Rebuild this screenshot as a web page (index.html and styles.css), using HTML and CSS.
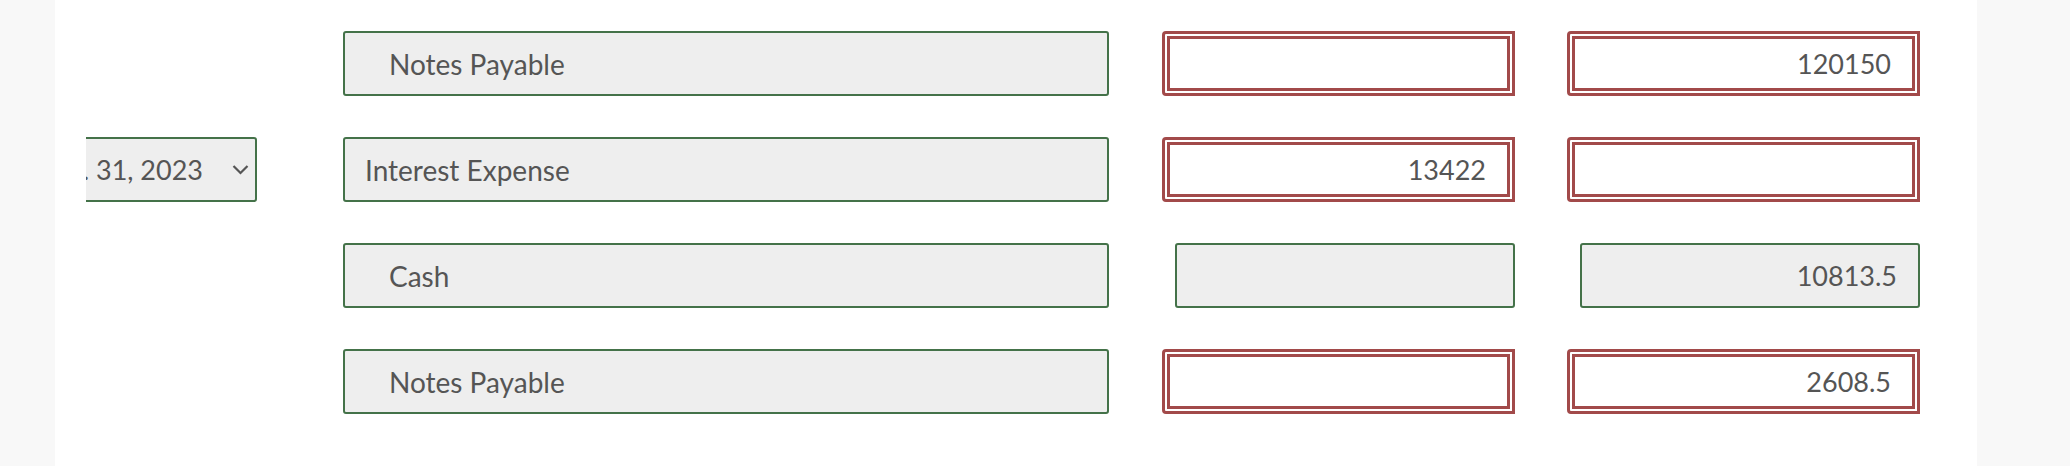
FILE: index.html
```html
<!DOCTYPE html>
<html lang="en">
<head>
<meta charset="utf-8">
<title>Journal entry</title>
<link rel="stylesheet" href="styles.css">
</head>
<body>
<div class="page">
  <div class="side"></div>
  <main class="main">
    <div class="row">
      <div class="date-cell"></div>
      <div class="account credit">Notes Payable</div>
      <div class="amount"><div class="invalid"><div class="field"></div></div></div>
      <div class="amount second"><div class="invalid"><div class="field">120150</div></div></div>
    </div>
    <div class="row">
      <div class="date-cell">
        <div class="select">
          <span class="select-text">Dec. 31, 2023</span>
          <svg class="chev" width="17" height="11" viewBox="0 0 17 11"><polyline points="1.5,2 8.5,9 15.5,2" fill="none" stroke="#555" stroke-width="2.2"/></svg>
        </div>
      </div>
      <div class="account">Interest Expense</div>
      <div class="amount"><div class="invalid"><div class="field">13422</div></div></div>
      <div class="amount second"><div class="invalid"><div class="field"></div></div></div>
    </div>
    <div class="row">
      <div class="date-cell"></div>
      <div class="account credit">Cash</div>
      <div class="amount"><div class="valid"></div></div>
      <div class="amount second"><div class="valid">10813.5</div></div>
    </div>
    <div class="row">
      <div class="date-cell"></div>
      <div class="account credit">Notes Payable</div>
      <div class="amount"><div class="invalid"><div class="field"></div></div></div>
      <div class="amount second"><div class="invalid"><div class="field">2608.5</div></div></div>
    </div>
  </main>
  <div class="side"></div>
</div>
</body>
</html>
```
FILE: styles.css
```css
html, body {
  margin: 0;
  padding: 0;
  background: #ffffff;
}
body {
  font-family: "Lato", "Liberation Sans", sans-serif;
  color: #555555;
  font-size: 28px;
}
.page {
  display: grid;
  grid-template-columns: 55px 1fr 93px;
  height: 466px;
}
.side {
  background: #f8f8f8;
}
.main {
  background: #ffffff;
  padding-top: 31px;
  display: flex;
  flex-direction: column;
  gap: 41px;
}
.row {
  display: flex;
  height: 65px;
}
.date-cell {
  margin-left: 31px;
  width: 171px;
  flex: none;
  display: flex;
  justify-content: flex-end;
  overflow: hidden;
}
.select {
  flex: none;
  box-sizing: border-box;
  height: 65px;
  border: 2px solid #447249;
  border-radius: 3px;
  background: #eeeeee;
  display: flex;
  align-items: center;
  padding: 0 6px 0 20px;
  white-space: nowrap;
}
.select-text {
  font-size: 27px;
}
.chev {
  margin-left: 29px;
  flex: none;
}
.account {
  margin-left: 86px;
  width: 766px;
  flex: none;
  box-sizing: border-box;
  border: 2px solid #447249;
  border-radius: 3px;
  background: #eeeeee;
  display: flex;
  align-items: center;
  padding-left: 20px;
}
.account.credit {
  padding-left: 44px;
}
.amount {
  margin-left: 53px;
  width: 353px;
  flex: none;
  display: flex;
  justify-content: flex-end;
  font-size: 27px;
}
.amount.second {
  margin-left: 52px;
}
.valid {
  width: 340px;
  box-sizing: border-box;
  border: 2px solid #447249;
  border-radius: 3px;
  background: #eeeeee;
  display: flex;
  align-items: center;
  justify-content: flex-end;
  padding-right: 21px;
}
.invalid {
  width: 353px;
  box-sizing: border-box;
  border: 3px solid #a24a4a;
  border-radius: 4px 0 0 4px;
  padding: 2px;
  background: #ffffff;
  display: flex;
}
.field {
  flex: 1;
  border: 3px solid #a24a4a;
  background: #ffffff;
  display: flex;
  align-items: center;
  justify-content: flex-end;
  padding-right: 21px;
}
```
